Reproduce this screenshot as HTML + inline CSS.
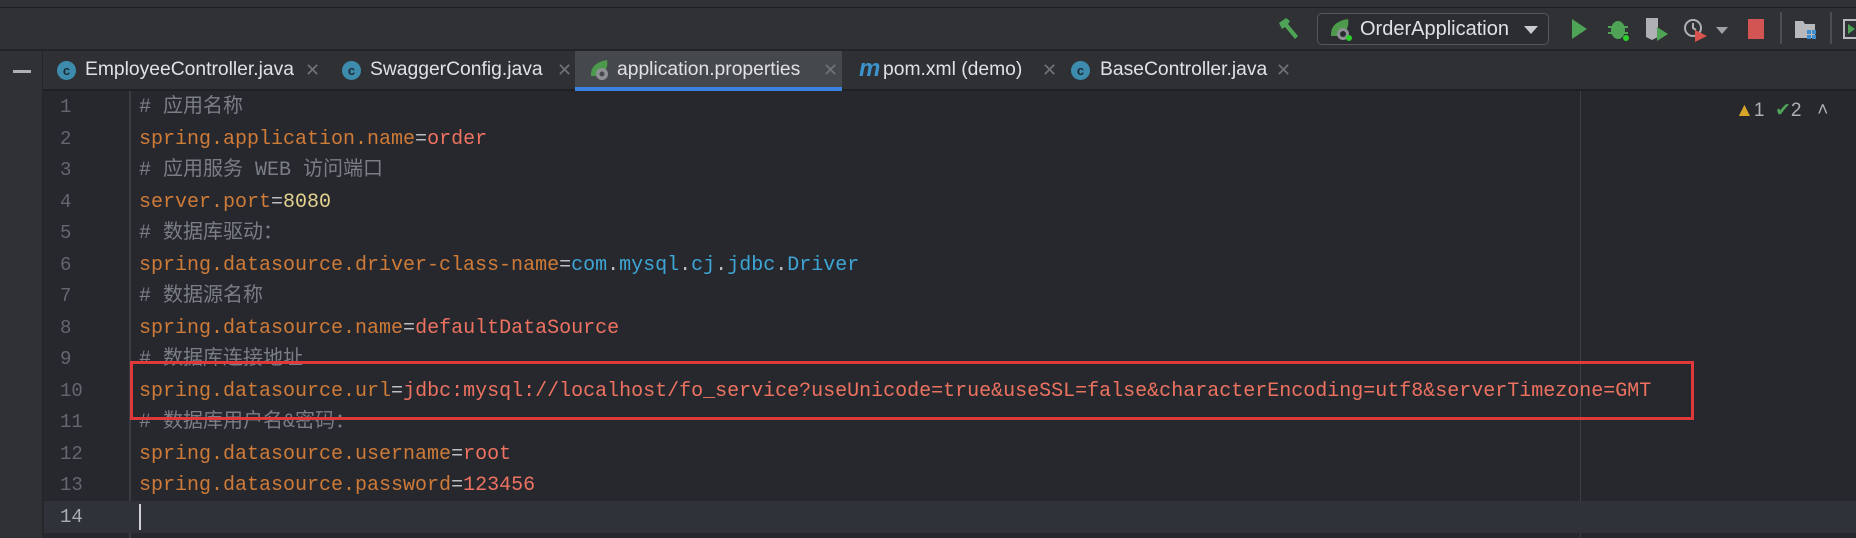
<!DOCTYPE html>
<html><head><meta charset="utf-8"><style>
*{margin:0;padding:0;box-sizing:border-box}
body{width:1856px;height:538px;overflow:hidden;background:#26282e;font-family:"Liberation Sans","Noto Sans CJK SC",sans-serif;position:relative}
.abs{position:absolute}
#top{left:0;top:0;width:1856px;height:8px;background:#2f3134;border-bottom:1px solid #1e1f22}
#tool{left:0;top:8px;width:1856px;height:43px;background:#2f3134;border-bottom:2px solid #222427}
#left{left:0;top:51px;width:43px;height:487px;background:#2f3134;border-right:1px solid #222427}
#tabs{left:43px;top:51px;width:1813px;height:40px;background:#2e3033;border-bottom:2px solid #1f2023}
.tab{position:absolute;top:0;height:38px;color:#dfe1e5;font-size:19.3px;line-height:38px;white-space:nowrap}
.ci{position:absolute;top:10px;width:19px;height:19px;border-radius:50%;background:#3d8cae;color:#1d2a33;font-size:13px;line-height:19px;text-align:center;font-weight:bold}
.x{position:absolute;color:#6f7276;font-size:18px}
.ln{position:absolute;left:0;width:100px;padding-left:60px;color:#63676e;height:31.5px;line-height:31.5px;font-family:"Liberation Mono",monospace;font-size:19px}
.l{position:absolute;left:139px;height:31.5px;line-height:31.5px;white-space:pre;font-family:"Liberation Mono","Noto Sans CJK SC",monospace;font-size:20px;color:#bcbec4}
.k{color:#cf7b38}.v{color:#ee7260}.c{color:#7a7e85}.n{color:#e3d38e}.b{color:#3ea6d6}
</style></head><body>
<div class="abs" id="top"></div>
<div class="abs" id="tool">
  <svg class="abs" style="left:1276px;top:8px" width="26" height="26" viewBox="0 0 26 26"><path d="M3 7 L10 2 L14 5 L12 8 L22 20 L19 23 L9 11 L6 13 Z" fill="#4fa356"/></svg>
  <div class="abs" style="left:1317px;top:5px;width:232px;height:32px;border:1px solid #55585c;border-radius:5px;background:#2b2d30"></div>
  <svg class="abs" style="left:1328px;top:8px" width="26" height="26"><path d="M3 20 Q2 6 20 3 Q22 14 12 20 Z" fill="#4e9a4c"/><circle cx="15" cy="18" r="6" fill="#8e9095"/><circle cx="15" cy="18" r="3" fill="#2b2d30"/><circle cx="21" cy="22" r="3" fill="#2ad12a"/></svg>
  <div class="abs" style="left:1360px;top:7px;color:#dfe1e5;font-size:20px;line-height:28px">OrderApplication</div>
  <div class="abs" style="left:1524px;top:18px;width:0;height:0;border-left:7px solid transparent;border-right:7px solid transparent;border-top:8px solid #c9cbcf"></div>
  <div class="abs" style="left:1572px;top:11px;width:0;height:0;border-top:10px solid transparent;border-bottom:10px solid transparent;border-left:15px solid #4fa356"></div>
  <svg class="abs" style="left:1606px;top:8px" width="26" height="26"><ellipse cx="12" cy="14" rx="7" ry="9" fill="#4fa356"/><rect x="2" y="10" width="20" height="2" fill="#4fa356"/><rect x="2" y="16" width="20" height="2" fill="#4fa356"/><circle cx="20" cy="22" r="3" fill="#2ad12a"/></svg>
  <svg class="abs" style="left:1644px;top:7px" width="26" height="28"><path d="M2 3 L14 3 L14 22 L8 25 L2 22 Z" fill="#aeb0b5"/><path d="M13 12 L24 19 L13 26 Z" fill="#4fa356"/></svg>
  <svg class="abs" style="left:1683px;top:7px" width="26" height="28"><circle cx="10" cy="13" r="8" fill="none" stroke="#aeb0b5" stroke-width="2"/><path d="M10 8 L10 13 L13 15" stroke="#aeb0b5" stroke-width="2" fill="none"/><path d="M12 15 L24 21 L12 27 Z" fill="#d9534f"/></svg>
  <div class="abs" style="left:1716px;top:19px;width:0;height:0;border-left:6px solid transparent;border-right:6px solid transparent;border-top:7px solid #9da0a5"></div>
  <div class="abs" style="left:1748px;top:11px;width:16px;height:20px;background:#d35553"></div>
  <div class="abs" style="left:1780px;top:4px;width:2px;height:32px;background:#4a4d51"></div>
  <svg class="abs" style="left:1794px;top:9px" width="26" height="26"><path d="M1 4 L9 4 L11 7 L21 7 L21 21 L1 21 Z" fill="#b7b9bd"/><rect x="13" y="13" width="4" height="4" fill="#3d8ed1"/><rect x="18" y="13" width="4" height="4" fill="#3d8ed1"/><rect x="13" y="18" width="4" height="4" fill="#3d8ed1"/><rect x="18" y="18" width="4" height="4" fill="#3d8ed1"/></svg>
  <div class="abs" style="left:1830px;top:4px;width:2px;height:32px;background:#4a4d51"></div>
  <div class="abs" style="left:1843px;top:11px;width:16px;height:20px;border:2px solid #b7b9bd"></div>
  <div class="abs" style="left:1848px;top:16px;width:0;height:0;border-top:5px solid transparent;border-bottom:5px solid transparent;border-left:7px solid #4fa356"></div>
</div>
<div class="abs" id="left"><div class="abs" style="left:13px;top:19px;width:18px;height:3px;background:#aeb0b5"></div></div>
<div class="abs" id="tabs">
  <div class="tab" style="left:0;width:240px"><div class="ci" style="left:14px">c</div><span class="abs" style="left:42px">EmployeeController.java</span><span class="x" style="left:262px">✕</span></div>
  <div class="tab" style="left:299px"><div class="ci" style="left:0">c</div><span class="abs" style="left:28px">SwaggerConfig.java</span><span class="x" style="left:215px">✕</span></div>
  <div class="tab" style="left:532px;width:267px;height:40px;background:#45484d;border-bottom:4px solid #3b82e0">
    <svg class="abs" style="left:14px;top:7px" width="24" height="24"><path d="M2 18 Q1 5 18 2 Q20 12 10 18 Z" fill="#4e9a4c"/><circle cx="13" cy="16" r="6" fill="#8e9095"/><circle cx="13" cy="16" r="2.5" fill="#45484d"/></svg>
    <span class="abs" style="left:42px;line-height:38px">application.properties</span><span class="x" style="left:248px">✕</span></div>
  <div class="tab" style="left:812px"><span class="abs" style="left:4px;color:#3d93c9;font-weight:bold;font-style:italic;font-size:24px;line-height:36px">m</span><span class="abs" style="left:28px">pom.xml (demo)</span><span class="x" style="left:187px">✕</span></div>
  <div class="tab" style="left:1028px"><div class="ci" style="left:0">c</div><span class="abs" style="left:29px">BaseController.java</span><span class="x" style="left:205px">✕</span></div>
</div>
<div class="abs" style="left:129px;top:91px;width:2px;height:447px;background:#3a3d42"></div>
<div class="abs" style="left:1580px;top:91px;width:1px;height:447px;background:#3a3d42"></div>
<div class="abs" style="left:44px;top:501px;width:1812px;height:32px;background:#2f3239"></div>
<div class="abs" style="left:139px;top:504px;width:2px;height:26px;background:#cfd1d5"></div>
<div class="abs" style="left:1735px;top:99px;font-size:19px;color:#aeb0b5;white-space:nowrap"><span style="color:#d6a52a">▲</span>1 &nbsp;<span style="color:#4fa356">✔</span>2 &nbsp;&nbsp;˄</div>
<div class="abs" style="left:0;top:92px">
<div class="ln" style="top:0">1</div><div class="l c" style="top:0"># 应用名称</div>
<div class="ln" style="top:31.5px">2</div><div class="l" style="top:31.5px"><span class="k">spring.application.name</span>=<span class="v">order</span></div>
<div class="ln" style="top:63px">3</div><div class="l c" style="top:63px"># 应用服务 WEB 访问端口</div>
<div class="ln" style="top:94.5px">4</div><div class="l" style="top:94.5px"><span class="k">server.port</span>=<span class="n">8080</span></div>
<div class="ln" style="top:126px">5</div><div class="l c" style="top:126px"># 数据库驱动：</div>
<div class="ln" style="top:157.5px">6</div><div class="l" style="top:157.5px"><span class="k">spring.datasource.driver-class-name</span>=<span class="b">com</span>.<span class="b">mysql</span>.<span class="b">cj</span>.<span class="b">jdbc</span>.<span class="b">Driver</span></div>
<div class="ln" style="top:189px">7</div><div class="l c" style="top:189px"># 数据源名称</div>
<div class="ln" style="top:220.5px">8</div><div class="l" style="top:220.5px"><span class="k">spring.datasource.name</span>=<span class="v">defaultDataSource</span></div>
<div class="ln" style="top:252px">9</div><div class="l c" style="top:252px"># 数据库连接地址</div>
<div class="ln" style="top:283.5px">10</div><div class="l" style="top:283.5px"><span class="k">spring.datasource.url</span>=<span class="v">jdbc:mysql://localhost/fo_service?useUnicode=true&amp;useSSL=false&amp;characterEncoding=utf8&amp;serverTimezone=GMT</span></div>
<div class="ln" style="top:315px">11</div><div class="l c" style="top:315px"># 数据库用户名&amp;密码：</div>
<div class="ln" style="top:346.5px">12</div><div class="l" style="top:346.5px"><span class="k">spring.datasource.username</span>=<span class="v">root</span></div>
<div class="ln" style="top:378px">13</div><div class="l" style="top:378px"><span class="k">spring.datasource.password</span>=<span class="v">123456</span></div>
<div class="ln" style="top:409.5px;color:#a9acb1">14</div>
</div>
<div class="abs" style="left:130px;top:361px;width:1564px;height:59px;border:3px solid #e0393b"></div>
</body></html>
